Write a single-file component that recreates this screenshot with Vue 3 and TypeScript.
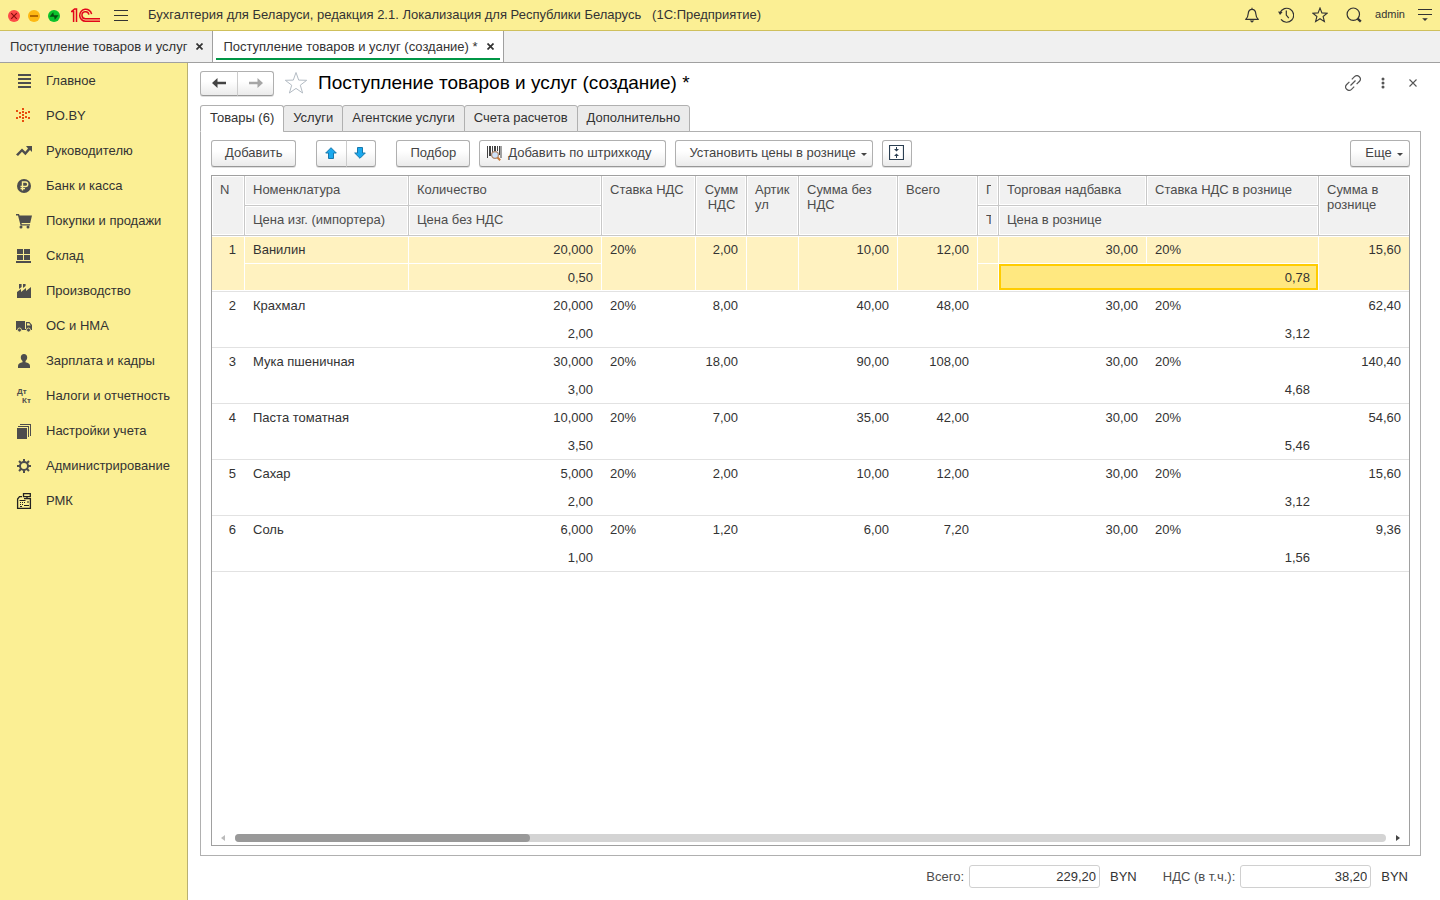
<script setup lang="ts">
import { ref } from 'vue'

interface Section {
  id: string
  label: string
}

interface GoodsRow {
  n: number
  name: string
  qty: string
  price: string
  vatRate: string
  vat: string
  net: string
  total: string
  markup: string
  retailVat: string
  retailPrice: string
  retailSum: string
}

const sections: Section[] = [
  { id: 'main', label: 'Главное' },
  { id: 'poby', label: 'PO.BY' },
  { id: 'chief', label: 'Руководителю' },
  { id: 'bank', label: 'Банк и касса' },
  { id: 'trade', label: 'Покупки и продажи' },
  { id: 'store', label: 'Склад' },
  { id: 'factory', label: 'Производство' },
  { id: 'assets', label: 'ОС и НМА' },
  { id: 'staff', label: 'Зарплата и кадры' },
  { id: 'tax', label: 'Налоги и отчетность' },
  { id: 'setup', label: 'Настройки учета' },
  { id: 'admin', label: 'Администрирование' },
  { id: 'rmk', label: 'РМК' },
]

const pages: string[] = ['Товары (6)', 'Услуги', 'Агентские услуги', 'Счета расчетов', 'Дополнительно']
const activePage = ref(0)
const selected = ref(1)
const total = ref('229,20')
const vatTotal = ref('38,20')

const rows: GoodsRow[] = [
  { n: 1, name: 'Ванилин', qty: '20,000', price: '0,50', vatRate: '20%', vat: '2,00', net: '10,00', total: '12,00', markup: '30,00', retailVat: '20%', retailPrice: '0,78', retailSum: '15,60' },
  { n: 2, name: 'Крахмал', qty: '20,000', price: '2,00', vatRate: '20%', vat: '8,00', net: '40,00', total: '48,00', markup: '30,00', retailVat: '20%', retailPrice: '3,12', retailSum: '62,40' },
  { n: 3, name: 'Мука пшеничная', qty: '30,000', price: '3,00', vatRate: '20%', vat: '18,00', net: '90,00', total: '108,00', markup: '30,00', retailVat: '20%', retailPrice: '4,68', retailSum: '140,40' },
  { n: 4, name: 'Паста томатная', qty: '10,000', price: '3,50', vatRate: '20%', vat: '7,00', net: '35,00', total: '42,00', markup: '30,00', retailVat: '20%', retailPrice: '5,46', retailSum: '54,60' },
  { n: 5, name: 'Сахар', qty: '5,000', price: '2,00', vatRate: '20%', vat: '2,00', net: '10,00', total: '12,00', markup: '30,00', retailVat: '20%', retailPrice: '3,12', retailSum: '15,60' },
  { n: 6, name: 'Соль', qty: '6,000', price: '1,00', vatRate: '20%', vat: '1,20', net: '6,00', total: '7,20', markup: '30,00', retailVat: '20%', retailPrice: '1,56', retailSum: '9,36' },
]
</script>

<template>
  <div class="app">
    <header class="titlebar">
      <div class="lights">
        <button class="light" aria-label="Закрыть окно">
          <svg width="12" height="12" viewBox="0 0 12 12"><circle cx="6" cy="6" r="6" fill="#fc4b48" /><path d="M3.2 3.2l5.6 5.6M8.8 3.2L3.2 8.8" stroke="#8a0f10" stroke-width="1.2" /></svg>
        </button>
        <button class="light" aria-label="Свернуть">
          <svg width="12" height="12" viewBox="0 0 12 12"><circle cx="6" cy="6" r="6" fill="#fdb813" /><path d="M2 6h8" stroke="#b26a00" stroke-width="2" /></svg>
        </button>
        <button class="light" aria-label="Развернуть">
          <svg width="12" height="12" viewBox="0 0 12 12"><circle cx="6" cy="6" r="6" fill="#0cc22c" /><path d="M1.500 6.800L5.200 2.200l1 4.600zM10.500 5.200L6.800 9.800l-1-4.600z" fill="#044d10" /></svg>
        </button>
      </div>
      <svg class="logo" width="30" height="15" viewBox="0 0 30 15" fill="none" stroke="#e2061a" stroke-width="1.500">
        <path d="M0 3.600h2.600V14M0.400 3.600L3.600 1h1.900V14" />
        <path d="M20.600 6.200A6 6 0 1 0 14.600 13.300H29" />
        <path d="M17.900 6.600A3.500 3.500 0 1 0 14.600 10.800H29" />
      </svg>
      <button class="icon-btn burger" aria-label="Меню">
        <svg width="14" height="12" viewBox="0 0 14 12" stroke="#333" stroke-width="1"><path d="M0 .5h14M0 5.500h14M0 10.500h14" /></svg>
      </button>
      <div class="app-name">Бухгалтерия для Беларуси, редакция 2.1. Локализация для Республики Беларусь &nbsp; (1С:Предприятие)</div>
      <div class="tools">
        <button class="icon-btn" aria-label="Уведомления">
          <svg width="16" height="16" viewBox="0 0 16 16" fill="none" stroke="#333" stroke-width="1.200"><path d="M8 .8v1.400M1.200 12.300h13.600M2 12c1.800-1.200 2-3 2.200-5.200C4.400 4 5.800 2.300 8 2.300s3.600 1.700 3.800 4.500C12 9 12.200 10.800 14 12" /><path d="M5.600 13.600h4.800L8 15.800z" fill="#333" stroke="none" /></svg>
        </button>
        <button class="icon-btn" aria-label="История">
          <svg width="16" height="16" viewBox="0 0 16 16" fill="none" stroke="#333" stroke-width="1.200"><path d="M2.100 5.800A7 7 0 1 1 3 12.400M8.300 3.500v4.600l2.500 3" /><path d="M0 4.600l4.600.4L2 8z" fill="#333" stroke="none" /></svg>
        </button>
        <button class="icon-btn" aria-label="Избранное">
          <svg width="16" height="16" viewBox="0 0 16 16" fill="none" stroke="#333" stroke-width="1.100"><path d="M8 1l1.900 4.900 5.200.3-4 3.300 1.300 5.100L8 11.700l-4.400 2.900 1.300-5.100-4-3.300 5.200-.3z" /></svg>
        </button>
        <button class="icon-btn" aria-label="Поиск">
          <svg width="16" height="16" viewBox="0 0 16 16" fill="none" stroke="#333"><circle cx="7.300" cy="7.200" r="6.200" stroke-width="1.200" /><path d="M11.600 11.600l3.200 3" stroke-width="2.400" /></svg>
        </button>
      </div>
      <a class="user" href="#">admin</a>
      <button class="icon-btn" aria-label="Настройки">
        <svg width="14" height="14" viewBox="0 0 14 14" fill="none" stroke="#333"><path d="M0 1.500h14M0 6.500h14" /><path d="M4.200 10.200h5.600L7 13z" fill="#333" stroke="none" /></svg>
      </button>
    </header>

    <nav class="windows">
      <div class="win">
        <a href="#">Поступление товаров и услуг</a>
        <button class="win-x" aria-label="Закрыть вкладку"><svg width="7" height="7" viewBox="0 0 7 7" stroke="#333" stroke-width="1.700"><path d="M.5.5l6 6M6.500.5l-6 6" /></svg></button>
      </div>
      <div class="win current">
        <a href="#">Поступление товаров и услуг (создание) *</a>
        <button class="win-x" aria-label="Закрыть вкладку"><svg width="7" height="7" viewBox="0 0 7 7" stroke="#333" stroke-width="1.700"><path d="M.5.5l6 6M6.500.5l-6 6" /></svg></button>
      </div>
    </nav>

    <div class="body">
      <nav class="sections">
        <a v-for="s in sections" :key="s.id" class="section" href="#">
          <svg width="16" height="16" viewBox="0 0 16 16" fill="#4d4d4d">
            <path v-if="s.id === 'main'" d="M2 1h13v2H2zM2 5h13v2H2zM2 9h13v2H2zM2 13h13v2H2z" />
            <path v-else-if="s.id === 'poby'" fill="#e84e0f" d="M6 0h2v2H6zM6 3h2v2H6zM6 6h2v2H6zM6 9h2v2H6zM6 12h2v2H6zM0 2h2v2H0zM12 3h2v2h-2zM3 4h2v2H3zM9 4h2v2H9zM0 9h2v2H0zM3 8h2v2H3zM9 8h2v2H9zM12 9h2v2h-2z" />
            <path v-else-if="s.id === 'chief'" d="M10 3h6v6l-2-2-4.600 5.200L6 8.800 2 13l-2-1.500L6 5.500l3.300 3.300L12 5.500z" />
            <g v-else-if="s.id === 'bank'">
              <circle cx="8" cy="8" r="7" />
              <path d="M6.500 12.500V4h3a2.200 2.200 0 0 1 0 4.500H4.500M4.500 10.600h4.500" fill="none" stroke="#fbef94" stroke-width="1.400" />
            </g>
            <g v-else-if="s.id === 'trade'">
              <path d="M0 1h3l.6 1.500H16L14.200 10H5.500l.3 1.200H14v1.300H4.600L2 2.500H0z" />
              <circle cx="5" cy="14" r="1.500" /><circle cx="12" cy="14" r="1.500" />
            </g>
            <path v-else-if="s.id === 'store'" d="M1 1h6v5H1zM8 1h6v5H8zM1 7h6v5H1zM8 7h6v5H8zM0 13h15v2H0z" />
            <path v-else-if="s.id === 'factory'" d="M1 15V9l4-3v3l5-4v3l5-4v11zM3 1h2.600v3L3 6zM7 1h2.600v2L7 5z" />
            <g v-else-if="s.id === 'assets'">
              <path d="M0 3h9v8H0zM10 4h3.500L16 7v5H0v-1h10z" />
              <path d="M11 5.300h2.200L14.700 7.500H11z" fill="#fbef94" />
              <circle cx="3.500" cy="12" r="2" stroke="#fbef94" stroke-width=".8" /><circle cx="12.500" cy="12" r="2" stroke="#fbef94" stroke-width=".8" />
            </g>
            <path v-else-if="s.id === 'staff'" d="M8 1c2 0 3.200 1.400 3.200 3.300 0 1.700-.7 3-1.700 3.800v1.200c2.600.5 4.500 1.500 4.500 3.700v2H2v-2c0-2.200 1.900-3.200 4.500-3.700V8.100c-1-.8-1.700-2.100-1.700-3.800C4.800 2.400 6 1 8 1z" />
            <g v-else-if="s.id === 'tax'" class="dtkt">
              <text x="1" y="6">Дт</text>
              <text x="6" y="15">Кт</text>
            </g>
            <path v-else-if="s.id === 'setup'" d="M1 5h10v11H1zM2 3h11v11h-1V4H2zM4 1h11v12h-1V2H4z" />
            <g v-else-if="s.id === 'admin'" fill="none" stroke="#4d4d4d">
              <circle cx="8" cy="8" r="4" stroke-width="2" />
              <path d="M8 1v3M8 12v3M1 8h3M12 8h3M3 3l2.200 2.200M10.800 10.800L13 13M3 13l2.200-2.200M10.800 5.200L13 3" stroke-width="2" />
            </g>
            <g v-else fill="none" stroke="#222">
              <path d="M7.500.7h6.800v3H7.500zM11 3.700v2M6 3.700H3.500L1.600 6v9.300h12.800V5.700H8" stroke-width="1.300" />
              <path d="M3.500 7.500h6M4 9.500h1M6 9.500h1M8 9.500h1M4 11.500h1M6 11.500h1M4 13.500h2M11 9h2M8 12.500h5" stroke-width="1.100" />
            </g>
          </svg>
          <span>{{ s.label }}</span>
        </a>
      </nav>

      <main class="form">
        <div class="form-head">
          <div class="pair">
            <button class="btn" aria-label="Назад"><svg width="14" height="10" viewBox="0 0 14 10" fill="#444"><path d="M0 5l5.500-5v3.700H14v2.600H5.500V10z" /></svg></button>
            <button class="btn" aria-label="Вперед"><svg width="14" height="10" viewBox="0 0 14 10" fill="#a6a6a6"><path d="M14 5L8.500 0v3.700H0v2.600h8.500V10z" /></svg></button>
          </div>
          <button class="icon-btn star" aria-label="В избранное">
            <svg width="24" height="24" viewBox="0 0 24 24" fill="#fff" stroke="#b4bcc4"><path d="M12 1.500l2.700 7.600 8 .2-6.400 4.900 2.300 7.800L12 17.400 5.400 22l2.300-7.800L1.300 9.300l8-.2z" /></svg>
          </button>
          <h1>Поступление товаров и услуг (создание) *</h1>
          <div class="form-tools">
            <button class="icon-btn" aria-label="Ссылка">
              <svg width="16" height="16" viewBox="0 0 16 16" fill="none" stroke="#555" stroke-width="1.200"><path d="M6.800 4.400l2.700-2.700a3 3 0 0 1 4.800 4.800L11.600 9.200M9.200 11.600l-2.700 2.700a3 3 0 0 1-4.800-4.800L4.400 6.800M5.500 10.500l5-5" /></svg>
            </button>
            <button class="icon-btn" aria-label="Еще"><svg width="4" height="12" viewBox="0 0 4 12" fill="#555"><circle cx="2" cy="2" r="1.500" /><circle cx="2" cy="6" r="1.500" /><circle cx="2" cy="10" r="1.500" /></svg></button>
            <button class="icon-btn" aria-label="Закрыть"><svg width="8" height="8" viewBox="0 0 8 8" stroke="#555" stroke-width="1.100"><path d="M.5.5l7 7M7.500.5l-7 7" /></svg></button>
          </div>
        </div>

        <div class="pages" role="tablist">
          <button v-for="(p, i) in pages" :key="p" class="page" :class="{ active: i === activePage }" role="tab" :aria-selected="i === activePage" @click="activePage = i">{{ p }}</button>
        </div>

        <section class="panel">
          <div class="toolbar">
            <button class="btn wide">Добавить</button>
            <div class="pair arrows">
              <button class="btn" aria-label="Вверх"><svg width="12" height="12" viewBox="0 0 12 12" fill="#1ba9ee" stroke="#1878ac"><path d="M6 .7L11.300 6H8.500v5.500h-5V6H.7z" /></svg></button>
              <button class="btn" aria-label="Вниз"><svg width="12" height="12" viewBox="0 0 12 12" fill="#1ba9ee" stroke="#1878ac"><path d="M6 11.300L.7 6h2.800V.5h5V6h2.800z" /></svg></button>
            </div>
            <button class="btn wide">Подбор</button>
            <button class="btn barcode">
              <svg width="15" height="16" viewBox="0 0 15 16"><path d="M0 1h1v12H0zM2 1h2v10H2zM5 1h1v7H5zM7 1h2v5H7zM10 1h1v5h-1zM12 1h1v9h-1zM13.500 1h1v12h-1z" fill="#444" /><circle cx="8" cy="10" r="3.400" fill="#cfe3fa" stroke="#b08a70" stroke-width="1.200" /><path d="M10.500 12.500l2.700 2.700" stroke="#c77b3c" stroke-width="2" /></svg>
              <span>Добавить по штрихкоду</span>
            </button>
            <button class="btn wide drop">Установить цены в рознице <i class="caret"></i></button>
            <button class="btn square" aria-label="Свернуть строки">
              <svg width="15" height="15" viewBox="0 0 15 15"><path d="M.5.5h14v14H.5z" fill="#fff" stroke="#2b3f52" stroke-width="1.200" /><path d="M7 2h1v2h2L7.500 6.500 5 4h2zM7 13h1v-2h2L7.500 8.500 5 11h2z" fill="#2b3f52" /></svg>
            </button>
            <button class="btn wide drop more">Еще <i class="caret"></i></button>
          </div>

          <div class="grid">
            <div class="grid-view">
              <table>
                <colgroup>
                  <col class="c-n" /><col class="c-name" /><col class="c-qty" /><col class="c-rate" /><col class="c-vat" /><col class="c-art" />
                  <col class="c-net" /><col class="c-total" /><col class="c-tiny" /><col class="c-markup" /><col class="c-rvat" /><col />
                </colgroup>
                <thead>
                  <tr>
                    <th rowspan="2">N</th>
                    <th>Номенклатура</th>
                    <th>Количество</th>
                    <th rowspan="2">Ставка НДС</th>
                    <th rowspan="2" class="mid">Сумм НДС</th>
                    <th rowspan="2">Артик<br />ул</th>
                    <th rowspan="2">Сумма без НДС</th>
                    <th rowspan="2">Всего</th>
                    <th><div class="cut">П</div></th>
                    <th>Торговая надбавка</th>
                    <th>Ставка НДС в рознице</th>
                    <th rowspan="2" class="last">Сумма в рознице</th>
                  </tr>
                  <tr>
                    <th>Цена изг. (импортера)</th>
                    <th>Цена без НДС</th>
                    <th><div class="cut">Т</div></th>
                    <th colspan="2">Цена в рознице</th>
                  </tr>
                </thead>
                <tbody v-for="r in rows" :key="r.n" :class="{ selected: r.n === selected }" @click="selected = r.n">
                  <tr>
                    <td rowspan="2" class="num low">{{ r.n }}</td>
                    <td>{{ r.name }}</td>
                    <td class="num">{{ r.qty }}</td>
                    <td rowspan="2" class="low">{{ r.vatRate }}</td>
                    <td rowspan="2" class="num low">{{ r.vat }}</td>
                    <td rowspan="2" class="low"></td>
                    <td rowspan="2" class="num low">{{ r.net }}</td>
                    <td rowspan="2" class="num low">{{ r.total }}</td>
                    <td></td>
                    <td class="num">{{ r.markup }}</td>
                    <td>{{ r.retailVat }}</td>
                    <td rowspan="2" class="num low last">{{ r.retailSum }}</td>
                  </tr>
                  <tr>
                    <td class="low"></td>
                    <td class="num low">{{ r.price }}</td>
                    <td class="low"></td>
                    <td colspan="2" class="num low focus">{{ r.retailPrice }}</td>
                  </tr>
                </tbody>
              </table>
            </div>
            <div class="hscroll">
              <button class="icon-btn" aria-label="Прокрутить влево"><svg width="4" height="6" viewBox="0 0 4 6" fill="#bbb"><path d="M4 0v6L0 3z" /></svg></button>
              <div class="track"><div class="thumb"></div></div>
              <button class="icon-btn" aria-label="Прокрутить вправо"><svg width="4" height="6" viewBox="0 0 4 6" fill="#444"><path d="M0 0v6l4-3z" /></svg></button>
            </div>
          </div>
        </section>

        <footer class="totals">
          <label for="total">Всего:</label>
          <input id="total" v-model="total" type="text" />
          <span class="cur">BYN</span>
          <label for="vat-total">НДС (в т.ч.):</label>
          <input id="vat-total" v-model="vatTotal" type="text" />
          <span class="cur">BYN</span>
        </footer>
      </main>
    </div>
  </div>
</template>

<style>
body {
  margin: 0;
  background: #fff;
}
</style>

<style scoped>
.app {
  display: flex;
  flex-direction: column;
  min-height: 100vh;
  font: 13px/15px "Liberation Sans", Arial, sans-serif;
  color: #333;
}
.app *,
.app {
  box-sizing: border-box;
}
button,
input {
  font: inherit;
  color: inherit;
}
a {
  color: inherit;
  text-decoration: none;
}
svg {
  display: block;
  flex: none;
}
.icon-btn,
.light,
.win-x {
  display: flex;
  align-items: center;
  justify-content: center;
  padding: 0;
  border: 0;
  background: none;
}

.titlebar {
  display: flex;
  align-items: center;
  height: 31px;
  padding: 0 8px;
  background: #fbef94;
  border-bottom: 1px solid #cfc05c;
}
.lights {
  display: flex;
  gap: 8px;
  padding-top: 2px;
}
.logo {
  margin: 0 13px 0 11px;
}
.burger {
  margin-right: 20px;
  padding-top: 2px;
}
.app-name {
  flex: 1;
  padding-bottom: 2px;
  white-space: nowrap;
}
.tools {
  display: flex;
  gap: 18px;
}
.user {
  margin: 0 13px;
  padding-bottom: 2px;
  font-size: 11px;
}

.windows {
  display: flex;
  height: 32px;
  background: #f0f0f0;
  border-bottom: 1px solid #a0a0a0;
}
.win {
  display: flex;
  align-items: center;
  gap: 9px;
  padding: 0 9px 0 10px;
  border-right: 1px solid #a0a0a0;
  white-space: nowrap;
}
.current {
  background: linear-gradient(#009646, #009646) center bottom 2px / calc(100% - 6px) 2px no-repeat #fff;
}

.body {
  display: flex;
  flex: 1;
}
.sections {
  width: 188px;
  flex: none;
  background: #fbef94;
  border-right: 1px solid #b9b072;
}
.section {
  display: flex;
  align-items: center;
  gap: 14px;
  height: 35px;
  padding-left: 16px;
  white-space: nowrap;
}
.dtkt {
  font: bold 8px/8px "Liberation Sans", Arial, sans-serif;
}

.form {
  display: flex;
  flex-direction: column;
  flex: 1;
  min-width: 0;
  padding: 7px 19px 12px 12px;
}
.form-head {
  display: flex;
  align-items: center;
  height: 26px;
  margin-bottom: 9px;
}
h1 {
  flex: 1;
  margin: 0;
  font-size: 19px;
  line-height: 24px;
  font-weight: normal;
  color: #000;
  white-space: nowrap;
}
.star {
  margin: 0 10px 0 10px;
}
.form-tools {
  display: flex;
  align-items: center;
}
.form-tools .icon-btn {
  width: 30px;
  height: 24px;
}
.form-tools .icon-btn:last-child {
  width: 16px;
  margin-left: 7px;
}

.btn {
  display: flex;
  align-items: center;
  justify-content: center;
  height: 27px;
  padding: 0 8px;
  border: 1px solid #b0b0b0;
  border-bottom-color: #989898;
  border-radius: 3px;
  background: linear-gradient(#fff 40%, #ebebeb);
  box-shadow: 0 1px 0 #e0e0e0;
  color: #444;
  white-space: nowrap;
}
.wide {
  padding: 0 13px 2px;
}
.pair {
  display: flex;
}
.pair .btn {
  width: 38px;
  height: 25px;
}
.pair .btn:first-child {
  border-radius: 3px 0 0 3px;
}
.pair .btn:last-child {
  width: 37px;
  margin-left: -1px;
  border-left-color: #ccc;
  border-radius: 0 3px 3px 0;
}
.arrows {
  margin: 0 11px;
}
.arrows .btn,
.arrows .btn:last-child {
  width: 31px;
  height: 27px;
  padding: 0 2px 2px 0;
}
.arrows .btn:last-child {
  width: 30px;
}
.barcode {
  gap: 6px;
  padding: 0 14px 2px 7px;
}
.drop {
  gap: 5px;
  padding-right: 5px;
}
.caret {
  border: 3px solid transparent;
  border-top-color: #444;
  border-bottom: 0;
  margin-top: 4px;
}
.square {
  width: 30px;
  padding: 0 0 2px;
}
.more {
  min-width: 60px;
  margin-left: auto;
}

.pages {
  display: flex;
  height: 27px;
  margin-bottom: -1px;
  z-index: 1;
}
.page {
  padding: 0 9px 2px;
  margin-right: -1px;
  border: 1px solid #b0b0b0;
  border-radius: 3px 3px 0 0;
  background: #ebebeb;
}
.page.active {
  background: #fff;
  border-bottom-color: #fff;
}

.panel {
  display: flex;
  flex-direction: column;
  flex: 1;
  padding: 8px 10px 9px;
  border: 1px solid #b0b0b0;
}
.toolbar {
  display: flex;
  gap: 9px;
  margin-bottom: 8px;
}
.grid {
  display: flex;
  flex-direction: column;
  flex: 1;
  border: 1px solid #a0a0a0;
}
.grid-view {
  flex: 1;
}
table {
  width: 100%;
  table-layout: fixed;
  border-spacing: 0;
}
.c-n { width: 33px; }
.c-name { width: 164px; }
.c-qty { width: 193px; }
.c-rate { width: 94px; }
.c-vat { width: 51px; }
.c-art { width: 52px; }
.c-net { width: 99px; }
.c-total { width: 80px; }
.c-tiny { width: 21px; }
.c-markup { width: 148px; }
.c-rvat { width: 172px; }
th,
td {
  padding: 6px 8px 0;
  text-align: left;
  vertical-align: top;
}
th {
  height: 30px;
  background: #f1f1f1;
  box-shadow: inset -1px -1px #c8c8c8, inset -2px -2px #fff, inset 1px 1px #fff;
  font-weight: normal;
  color: #4d4d4d;
}
th.last {
  box-shadow: inset 0 -1px #c8c8c8, inset -1px -2px #fff, inset 1px 1px #fff;
}
.mid {
  text-align: center;
}
.cut {
  width: 5px;
  overflow: hidden;
}
td {
  height: 28px;
}
.num {
  padding-right: 9px;
  text-align: right;
}
.last {
  padding-right: 8px;
}
.low {
  box-shadow: inset 0 -1px #e2e2e2;
}
.selected td {
  background: #fff2c0;
  box-shadow: inset -1px -1px #fff;
}
.selected tr:first-child td {
  box-shadow: inset -1px -1px #fff, inset 0 1px #fff;
}
.selected td.low {
  box-shadow: inset 0 -1px #e2e2e2, inset -1px -2px #fff;
}
.selected tr:first-child td.low {
  box-shadow: inset 0 -1px #e2e2e2, inset -1px -2px #fff, inset 0 1px #fff;
}
.selected tr:first-child td.last {
  box-shadow: inset 0 -1px #e2e2e2, inset 0 -2px #fff, inset 0 1px #fff;
}
.selected td.focus {
  background: #ffe880;
  box-shadow: inset 0 -1px #e2e2e2, inset -1px -2px #fff, inset -3px -4px #ffcc00, inset 2px 2px #ffcc00;
}

.hscroll {
  display: flex;
  align-items: center;
  gap: 10px;
  padding: 0 9px 3px;
}
.track {
  flex: 1;
  height: 8px;
  border-radius: 4px;
  background: #d4d4d4;
}
.thumb {
  width: 295px;
  height: 8px;
  border-radius: 4px;
  background: #999;
}

.totals {
  display: flex;
  align-items: center;
  justify-content: flex-end;
  padding: 9px 13px 0 0;
  color: #4d4d4d;
}
.totals input {
  width: 131px;
  height: 23px;
  margin: 0 10px 0 5px;
  padding: 0 3px;
  border: 1px solid #d0d0d0;
  border-radius: 3px;
  color: #333;
  text-align: right;
}
.cur {
  color: #333;
}
.cur + label {
  margin-left: 26px;
}
</style>
